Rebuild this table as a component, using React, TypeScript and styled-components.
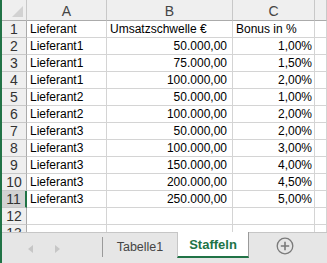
import styled, { createGlobalStyle } from 'styled-components';

const GlobalStyle = createGlobalStyle`
  html, body {
    margin: 0;
    padding: 0;
    background: #ffffff;
  }
`;

const Window = styled.div`
  width: 327px;
  height: 263px;
  display: flex;
  flex-direction: column;
  overflow: hidden;
  border-left: 2px solid #217346;
  box-sizing: border-box;
  font-family: 'Liberation Sans', Arial, sans-serif;
  background: #ffffff;
`;

const Sheet = styled.div`
  flex: 1;
  overflow: hidden;
  display: flex;
  flex-direction: column;
`;

const Row = styled.div<{ $height: number }>`
  display: flex;
  flex: none;
  height: ${({ $height }) => $height}px;
`;

const Corner = styled.div`
  position: relative;
  width: 25px;
  flex: none;
  box-sizing: border-box;
  background: #efefef;
  border-right: 1px solid #c8c8c8;
  border-bottom: 1px solid #ababab;

  &::after {
    content: '';
    position: absolute;
    right: 3px;
    bottom: 3px;
    width: 0;
    height: 0;
    border-left: 11px solid transparent;
    border-bottom: 11px solid #d2d2d2;
  }
`;

const ColHead = styled.div<{ $width?: number }>`
  width: ${({ $width }) => ($width ? `${$width}px` : 'auto')};
  flex: ${({ $width }) => ($width ? 'none' : '1')};
  box-sizing: border-box;
  background: #efefef;
  border-right: 1px solid #c8c8c8;
  border-bottom: 1px solid #ababab;
  display: flex;
  align-items: center;
  justify-content: center;
  font-size: 14px;
  color: #444444;
  padding-top: 1px;
`;

const RowHead = styled.div<{ $selected?: boolean }>`
  width: 25px;
  flex: none;
  box-sizing: border-box;
  background: ${({ $selected }) => ($selected ? '#d2d2d2' : '#efefef')};
  border-right: ${({ $selected }) =>
    $selected ? '2px solid #217346' : '1px solid #ababab'};
  border-bottom: 1px solid #c8c8c8;
  display: flex;
  align-items: center;
  justify-content: center;
  font-size: 14px;
  color: #333333;
  line-height: 16px;
`;

const Cell = styled.div<{ $width?: number; $right?: boolean; $pad?: number }>`
  width: ${({ $width }) => ($width ? `${$width}px` : 'auto')};
  flex: ${({ $width }) => ($width ? 'none' : '1')};
  box-sizing: border-box;
  border-right: 1px solid #d4d4d4;
  border-bottom: 1px solid #d4d4d4;
  display: flex;
  align-items: flex-end;
  justify-content: ${({ $right }) => ($right ? 'flex-end' : 'flex-start')};
  padding: 0 ${({ $pad }) => $pad ?? 2}px 0 3px;
  font-size: 12px;
  line-height: 15px;
  color: #000000;
  white-space: nowrap;
  overflow: hidden;
`;

const TabBar = styled.div`
  height: 31px;
  flex: none;
  box-sizing: border-box;
  background: #e6e6e6;
  border-top: 1px solid #c6c6c6;
  display: flex;
  align-items: flex-start;
`;

const NavArea = styled.div`
  width: 100px;
  height: 24px;
  display: flex;
  align-items: center;
  gap: 22px;
  padding-left: 26px;
  box-sizing: border-box;
  margin-top: 4px;
`;

const NavArrow = styled.div<{ $dir: 'left' | 'right' }>`
  width: 0;
  height: 0;
  border-top: 4px solid transparent;
  border-bottom: 4px solid transparent;
  ${({ $dir }) =>
    $dir === 'left'
      ? 'border-right: 5px solid #c6c6c6;'
      : 'border-left: 5px solid #c6c6c6;'}
`;

const Separator = styled.div`
  width: 1px;
  height: 20px;
  margin-top: 4px;
  background: #9a9a9a;
`;

const Tab = styled.div<{ $active?: boolean }>`
  height: ${({ $active }) => ($active ? '26px' : '24px')};
  margin-top: ${({ $active }) => ($active ? '-1px' : '0')};
  box-sizing: border-box;
  display: flex;
  align-items: center;
  justify-content: center;
  font-size: ${({ $active }) => ($active ? '13px' : '12.5px')};
  font-weight: ${({ $active }) => ($active ? 700 : 400)};
  color: ${({ $active }) => ($active ? '#217346' : '#444444')};
  background: ${({ $active }) => ($active ? '#ffffff' : 'transparent')};
  border-left: ${({ $active }) => ($active ? '1px solid #c6c6c6' : 'none')};
  border-right: ${({ $active }) => ($active ? '1px solid #9a9a9a' : 'none')};
  border-bottom: ${({ $active }) => ($active ? '2px solid #217346' : 'none')};
  width: ${({ $active }) => ($active ? '72px' : '74px')};
  padding-top: ${({ $active }) => ($active ? '1px' : '3px')};
`;

const AddButton = styled.div`
  flex: 1;
  height: 26px;
  display: flex;
  align-items: center;
  justify-content: center;
  padding-right: 6px;
`;

const data: [string, string, string][] = [
  ['Lieferant1', '50.000,00', '1,00%'],
  ['Lieferant1', '75.000,00', '1,50%'],
  ['Lieferant1', '100.000,00', '2,00%'],
  ['Lieferant2', '50.000,00', '1,00%'],
  ['Lieferant2', '100.000,00', '2,00%'],
  ['Lieferant3', '50.000,00', '2,00%'],
  ['Lieferant3', '100.000,00', '3,00%'],
  ['Lieferant3', '150.000,00', '4,00%'],
  ['Lieferant3', '200.000,00', '4,50%'],
  ['Lieferant3', '250.000,00', '5,00%'],
];

const widths = { a: 80, b: 126, c: 82 };

const PlusIcon = () => (
  <svg width="18" height="18" viewBox="0 0 18 18">
    <circle cx="9" cy="9" r="7.8" fill="none" stroke="#7a7a7a" strokeWidth="1.3" />
    <path d="M9 4.8v8.4M4.8 9h8.4" stroke="#7a7a7a" strokeWidth="1.6" />
  </svg>
);

export default function App() {
  return (
    <>
      <GlobalStyle />
      <Window>
        <Sheet>
          <Row $height={21}>
            <Corner />
            <ColHead $width={widths.a}>A</ColHead>
            <ColHead $width={widths.b}>B</ColHead>
            <ColHead $width={widths.c}>C</ColHead>
            <ColHead />
          </Row>
          <Row $height={17}>
            <RowHead>1</RowHead>
            <Cell $width={widths.a}>Lieferant</Cell>
            <Cell $width={widths.b}>Umsatzschwelle €</Cell>
            <Cell $width={widths.c}>Bonus in %</Cell>
            <Cell />
          </Row>
          {data.map(([supplier, amount, bonus], i) => (
            <Row $height={17} key={i}>
              <RowHead $selected={i === 9}>{i + 2}</RowHead>
              <Cell $width={widths.a}>{supplier}</Cell>
              <Cell $width={widths.b} $right $pad={5}>
                {amount}
              </Cell>
              <Cell $width={widths.c} $right $pad={2}>
                {bonus}
              </Cell>
              <Cell />
            </Row>
          ))}
          {[12, 13].map((n) => (
            <Row $height={17} key={n}>
              <RowHead>{n}</RowHead>
              <Cell $width={widths.a} />
              <Cell $width={widths.b} />
              <Cell $width={widths.c} />
              <Cell />
            </Row>
          ))}
        </Sheet>
        <TabBar>
          <NavArea>
            <NavArrow $dir="left" />
            <NavArrow $dir="right" />
          </NavArea>
          <Separator />
          <Tab>Tabelle1</Tab>
          <Tab $active>Staffeln</Tab>
          <AddButton>
            <PlusIcon />
          </AddButton>
        </TabBar>
      </Window>
    </>
  );
}
